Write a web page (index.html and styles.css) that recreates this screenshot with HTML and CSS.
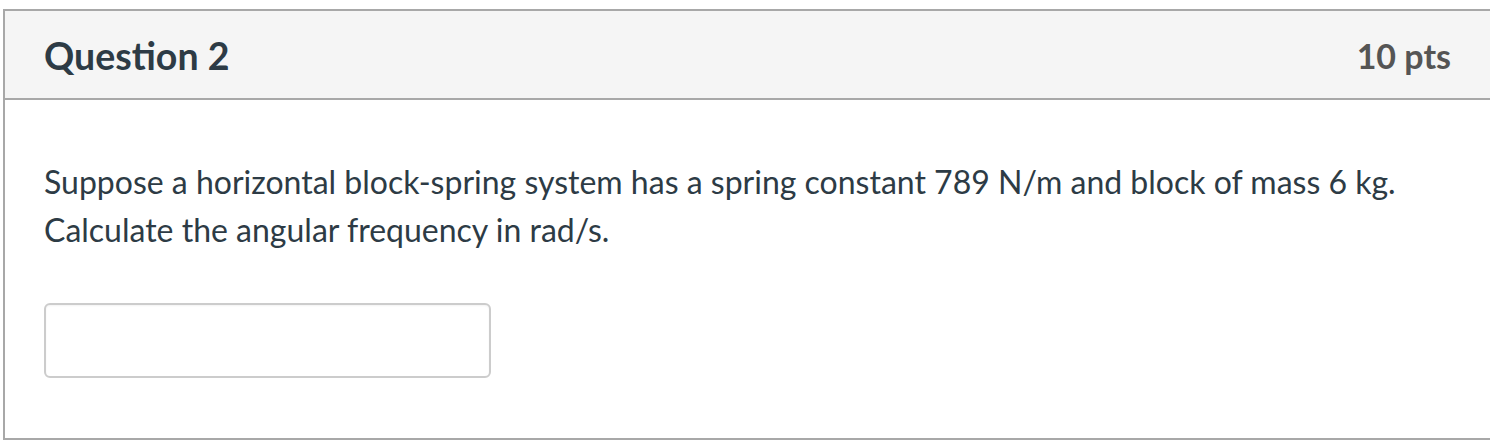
FILE: index.html
```html
<!DOCTYPE html>
<html lang="en">
<head>
<meta charset="utf-8">
<title>Question 2</title>
<link rel="stylesheet" href="styles.css">
</head>
<body>
<div class="question">
  <div class="question-header">
    <h2 class="question-title">Question 2</h2>
    <div class="question-points">10 pts</div>
  </div>
  <div class="question-body">
    <p class="question-text">Suppose a horizontal block-spring system has a spring constant 789 N/m and block of mass 6 kg. Calculate the angular frequency in rad/s.</p>
    <div class="answer">
      <input class="answer-input" type="text" aria-label="Answer">
    </div>
  </div>
</div>
</body>
</html>
```

FILE: styles.css
```css
html, body {
  margin: 0;
  padding: 0;
  background: #ffffff;
}

body {
  font-family: Lato, "Open Sans", "Liberation Sans", sans-serif;
  color: #2d3b45;
}

.question {
  margin: 9px 0 0 3px;
  border: 2px solid #a8a8a8;
  border-right: none;
}

.question-header {
  display: flex;
  align-items: center;
  justify-content: space-between;
  box-sizing: border-box;
  height: 89px;
  padding: 2px 39px 0 39px;
  background: #f5f5f5;
  border-bottom: 2px solid #a8a8a8;
}

.question-title {
  margin: 0;
  font-size: 37.5px;
  font-weight: 700;
  color: #2d3b45;
}

.question-points {
  font-size: 34px;
  font-weight: 700;
  color: #555555;
}

.question-body {
  padding: 58px 39px 60px 39px;
}

.question-text {
  margin: 0;
  font-size: 32px;
  line-height: 48px;
  max-width: 1380px;
}

.answer {
  margin-top: 49px;
}

.answer-input {
  display: block;
  box-sizing: border-box;
  width: 447px;
  height: 75px;
  margin: 0;
  border: 2px solid #cccccc;
  border-radius: 6px;
  background: #ffffff;
  box-shadow: inset 0 1px 2px rgba(0, 0, 0, 0.05);
}
```
